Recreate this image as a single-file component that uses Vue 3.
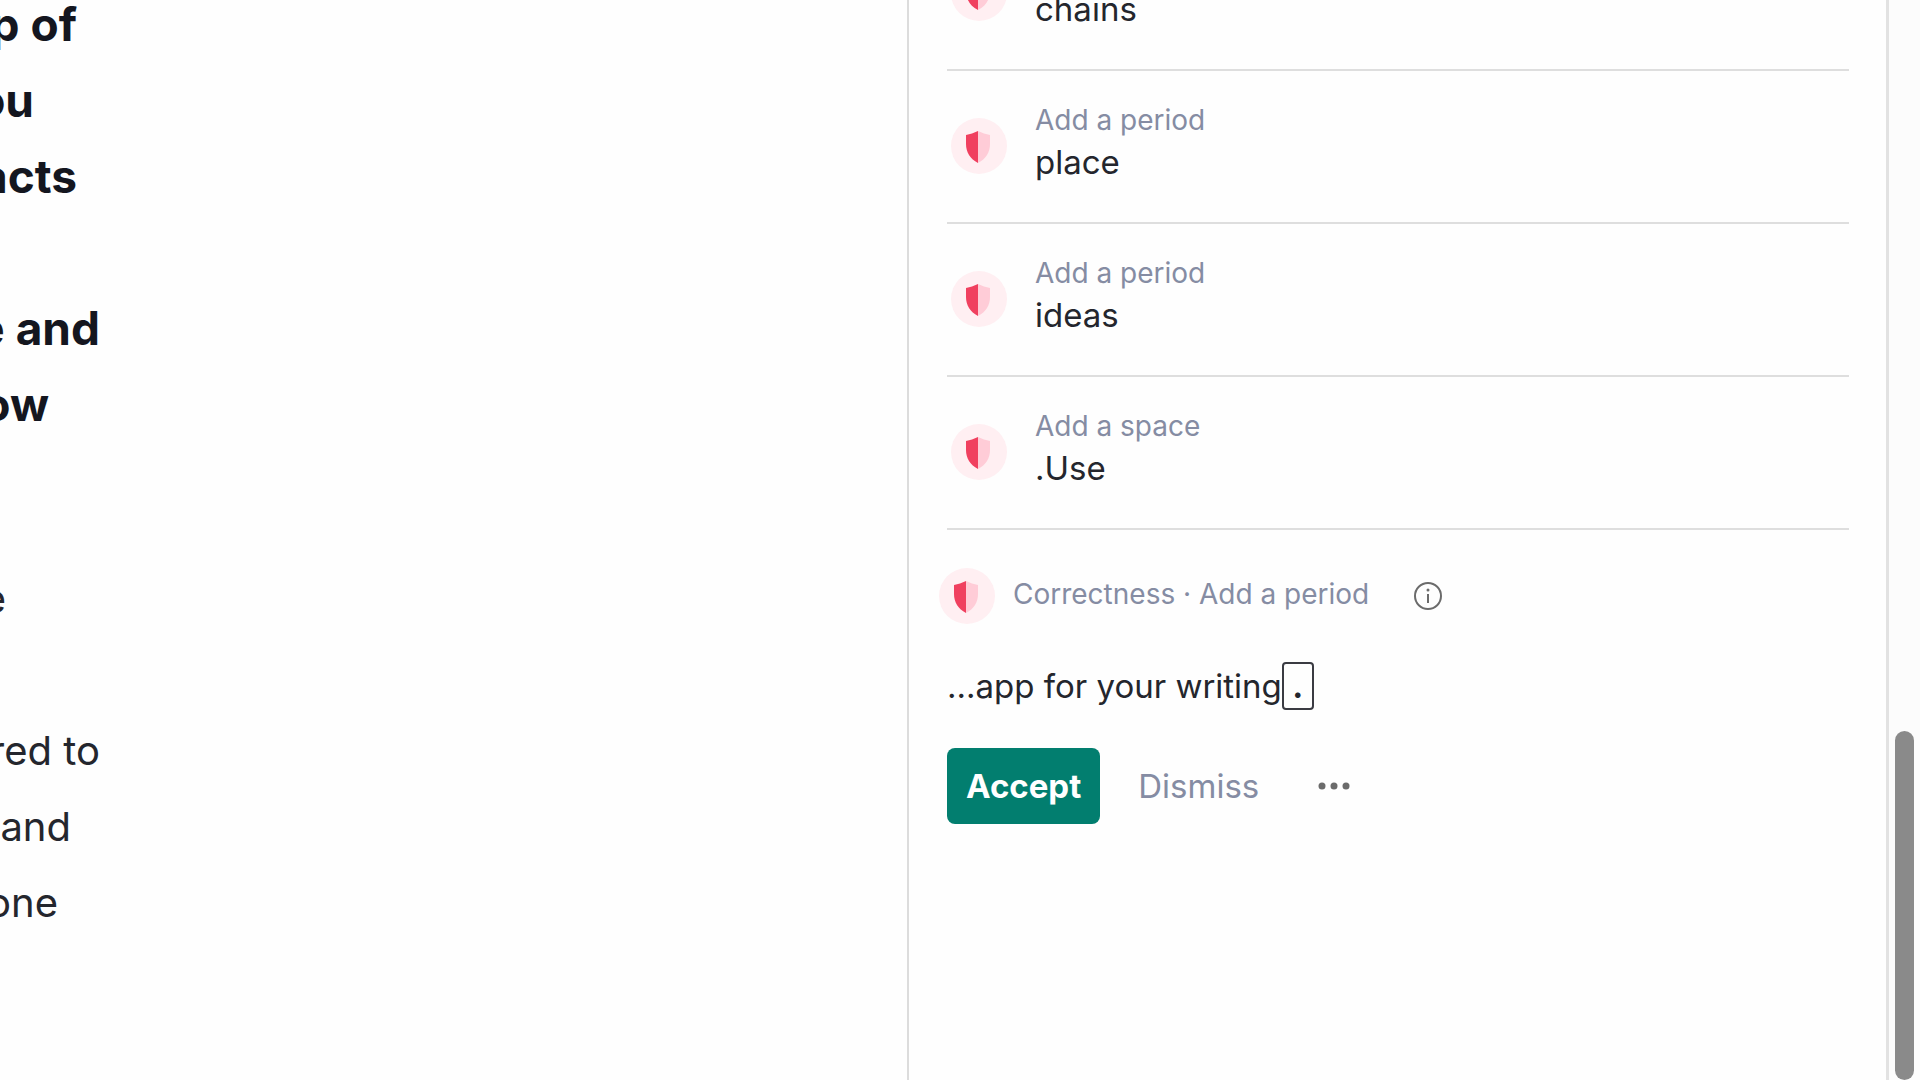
<template>
  <div class="editor">
    <main class="document">
      <h2 class="heading">
        <span
          v-for="(line, i) in headingLines"
          :key="i"
          class="line"
          :style="{ width: line.end + 'px' }"
        >{{ line.text }}</span>
      </h2>
      <p class="body-text">
        <span
          v-for="(line, i) in bodyLines"
          :key="i"
          class="line"
          :style="{ width: line.end + 'px' }"
        >{{ line.text }}</span>
      </p>
    </main>

    <aside class="panel">
      <ul class="list">
        <li v-for="(item, i) in suggestions" :key="i" class="item">
          <span class="badge">
            <svg viewBox="0 0 56 56" width="56" height="56" aria-hidden="true">
              <path d="M27 13 V45 C19 41 15 34 15 26 V17 C19 16 23 15 27 13 Z" fill="#f0405f" />
              <path d="M27 13 C31 15 35 16 39 17 V26 C39 34 35 41 27 45 Z" fill="#ffccd7" />
            </svg>
          </span>
          <div class="item-text">
            <span class="label">{{ item.label }}</span>
            <span class="word">{{ item.word }}</span>
          </div>
        </li>
      </ul>

      <section class="card">
        <header class="card-head">
          <span class="badge">
            <svg viewBox="0 0 56 56" width="56" height="56" aria-hidden="true">
              <path d="M27 13 V45 C19 41 15 34 15 26 V17 C19 16 23 15 27 13 Z" fill="#f0405f" />
              <path d="M27 13 C31 15 35 16 39 17 V26 C39 34 35 41 27 45 Z" fill="#ffccd7" />
            </svg>
          </span>
          <span class="label title">Correctness · Add a period</span>
          <button class="icon-button info" type="button" aria-label="Learn more">
            <svg viewBox="0 0 30 30" width="30" height="30" fill="none" stroke="#6b6b6b">
              <circle cx="15" cy="15" r="13" stroke-width="2" />
              <path d="M15 13 V22" stroke-width="2" />
              <circle cx="15" cy="9" r="1.5" fill="#6b6b6b" stroke="none" />
            </svg>
          </button>
        </header>
        <p class="sentence">...app for your writing<ins class="insert">.</ins></p>
        <div class="actions">
          <button class="accept" type="button">Accept</button>
          <button class="dismiss" type="button">Dismiss</button>
          <button class="icon-button more" type="button" aria-label="More actions">
            <svg viewBox="0 0 34 10" width="34" height="10" fill="#6b6b6b">
              <circle cx="5" cy="5" r="3.5" />
              <circle cx="17" cy="5" r="3.5" />
              <circle cx="29" cy="5" r="3.5" />
            </svg>
          </button>
        </div>
      </section>
    </aside>

    <div class="scrollbar">
      <div class="thumb"></div>
    </div>
  </div>
</template>

<script setup>
// end: where the line stops, measured from the left edge of the view
const headingLines = [
  { text: "p of", end: 77 },
  { text: "ou", end: 34 },
  { text: "acts", end: 77 },
  { text: "", end: 0 },
  { text: "e and", end: 100 },
  { text: "ow", end: 49 },
];

const bodyLines = [
  { text: "e", end: 6 },
  { text: "", end: 0 },
  { text: "red to", end: 100 },
  { text: "and", end: 71 },
  { text: "one", end: 58 },
];

const suggestions = [
  { label: "Add a period", word: "chains" },
  { label: "Add a period", word: "place" },
  { label: "Add a period", word: "ideas" },
  { label: "Add a space", word: ".Use" },
];
</script>

<style>
body {
  margin: 0;
  overflow: hidden;
}
</style>

<style scoped>
.editor {
  display: grid;
  grid-template-columns: 907fr 982fr 31px;
  height: 100vh;
  overflow: hidden;
  background: #fefefe;
  color: #24262d;
  font-family: Inter, "Liberation Sans", sans-serif;
}

/* document */
.document {
  overflow: hidden;
}

.heading,
.body-text {
  margin: 0;
}

.heading {
  margin-top: -14px;
  font-size: 46px;
  font-weight: 700;
  line-height: 76px;
  color: #14161f;
}

.body-text {
  margin-top: 119px;
  font-size: 40px;
  line-height: 76px;
}

.line {
  display: flex;
  justify-content: flex-end;
  height: 76px;
  white-space: pre;
}

/* suggestions */
.panel {
  box-sizing: border-box;
  padding: 0 37px 0 38px;
  border-left: 2px solid #dcdcdc;
  border-right: 3px solid #e2e2e2;
  overflow: hidden;
}

.list {
  margin: -82px 0 0;
  padding: 0;
  list-style: none;
}

.item {
  display: flex;
  align-items: center;
  gap: 28px;
  box-sizing: border-box;
  height: 153px;
  padding: 0 0 2px 4px;
  border-bottom: 2px solid #dedede;
}

.badge {
  flex: none;
  width: 56px;
  height: 56px;
  border-radius: 50%;
  background: #ffeff2;
}

.badge svg {
  display: block;
}

.item-text {
  display: flex;
  flex-direction: column;
  padding-bottom: 10px;
}

.label {
  font-size: 28px;
  line-height: 42px;
  color: #858ca3;
}

.word {
  font-size: 33px;
  line-height: 42px;
}

/* open card */
.card-head {
  display: flex;
  align-items: center;
  gap: 18px;
  margin: 38px 0 0 -8px;
}

.title {
  padding-bottom: 4px;
}

.icon-button {
  padding: 0;
  border: 0;
  background: none;
  cursor: pointer;
}

.icon-button svg {
  display: block;
}

.info {
  margin-left: 26px;
}

.sentence {
  margin: 38px 0 0;
  font-size: 33px;
  line-height: 48px;
}

.insert {
  display: inline-block;
  box-sizing: border-box;
  width: 32px;
  height: 48px;
  border: 2px solid #3a3b42;
  border-radius: 4px;
  line-height: 44px;
  font-weight: 700;
  text-align: center;
  text-decoration: none;
}

.actions {
  display: flex;
  align-items: center;
  margin-top: 38px;
}

.accept,
.dismiss {
  border: 0;
  font-family: inherit;
  font-size: 33px;
  cursor: pointer;
}

.accept {
  height: 76px;
  padding: 0 19px;
  border-radius: 8px;
  background: #027e6f;
  color: #fff;
  font-weight: 700;
}

.dismiss {
  padding: 0;
  margin-left: 38px;
  background: none;
  color: #858ca3;
}

.more {
  margin-left: 58px;
}

/* scrollbar */
.scrollbar {
  display: flex;
  flex-direction: column;
  justify-content: flex-end;
  background: #fcfcfc;
}

.thumb {
  width: 19px;
  height: 32.3%;
  margin-left: 6px;
  border-radius: 10px;
  background: #8a8a8a;
}
</style>
